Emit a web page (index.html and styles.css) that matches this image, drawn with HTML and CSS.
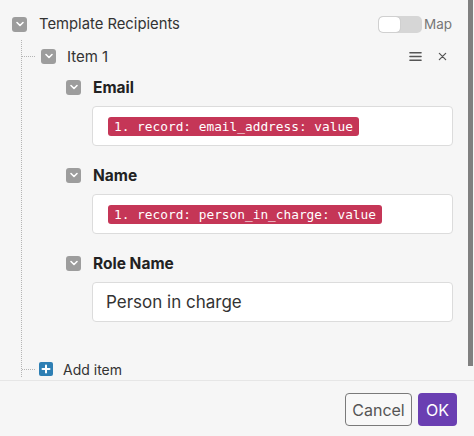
FILE: index.html
```html
<!DOCTYPE html>
<html lang="en">

<head>
  <meta charset="UTF-8">
  <meta name="viewport" content="width=device-width, initial-scale=1.0">
  <title>Template Recipients</title>
  <link rel="stylesheet" href="styles.css">
</head>

<body>
  <div class="dialog">
    <div class="body">
      <span class="scroll-thumb"></span>

      <div class="row top">
        <span class="chk"><svg viewBox="0 0 14 14"><path d="M4 5.5l3 3 3-3" /></svg></span>
        <span class="title">Template Recipients</span>
        <span class="toggle"><span class="knob"></span></span>
        <span class="map">Map</span>
      </div>

      <div class="tree">
        <div class="row item">
          <span class="chk"><svg viewBox="0 0 14 14"><path d="M4 5.5l3 3 3-3" /></svg></span>
          <span class="item-name">Item 1</span>
          <svg class="icon menu" viewBox="0 0 14 14"><path d="M1 3h12M1 7h12M1 11h12" /></svg>
          <svg class="icon close" viewBox="0 0 14 14"><path d="M3 3l8 8M11 3l-8 8" /></svg>
        </div>

        <div class="field">
          <div class="row label">
            <span class="chk"><svg viewBox="0 0 14 14"><path d="M4 5.5l3 3 3-3" /></svg></span>
            <span>Email</span>
          </div>
          <div class="input"><span class="pill">1. record: email_address: value</span></div>
        </div>

        <div class="field">
          <div class="row label">
            <span class="chk"><svg viewBox="0 0 14 14"><path d="M4 5.5l3 3 3-3" /></svg></span>
            <span>Name</span>
          </div>
          <div class="input"><span class="pill">1. record: person_in_charge: value</span></div>
        </div>

        <div class="field">
          <div class="row label">
            <span class="chk"><svg viewBox="0 0 14 14"><path d="M4 5.5l3 3 3-3" /></svg></span>
            <span>Role Name</span>
          </div>
          <div class="input text">Person in charge</div>
        </div>

        <div class="row add">
          <span class="plus"><svg viewBox="0 0 14 14"><path d="M7 3.5v7M3.5 7h7" /></svg></span>
          <span>Add item</span>
        </div>
      </div>
    </div>

    <div class="footer">
      <button class="btn cancel">Cancel</button>
      <button class="btn ok">OK</button>
    </div>
  </div>
</body>

</html>
```

FILE: styles.css
```css
* {
  margin: 0;
  padding: 0;
  box-sizing: border-box;
}

body {
  width: 474px;
  height: 436px;
  background: #f6f6f6;
  font-family: Inter, "Liberation Sans", sans-serif;
  color: #333;
  overflow: hidden;
}

.dialog {
  display: flex;
  flex-direction: column;
  height: 436px;
}

.body {
  position: relative;
  height: 381px;
  padding: 16px 0 0 12px;
  border-bottom: 1px solid #e6e6e6;
}

.scroll-thumb {
  position: absolute;
  top: 0;
  left: 468px;
  width: 5px;
  height: 366px;
  background: #808080;
}

.row {
  display: flex;
  align-items: center;
}

.chk {
  display: flex;
  align-items: center;
  justify-content: center;
  width: 15px;
  height: 15px;
  border-radius: 3px;
  background: #9d9d9d;
}

.chk svg {
  width: 14px;
  height: 14px;
  fill: none;
  stroke: #fff;
  stroke-width: 1.6;
  stroke-linecap: round;
  stroke-linejoin: round;
}

.top {
  height: 16px;
}

.title {
  margin-left: 12px;
  font-size: 14.8px;
  flex: 1;
}

.toggle {
  width: 44px;
  height: 17px;
  border-radius: 5px;
  background: #d6d6d6;
  padding: 1px;
}

.knob {
  display: block;
  width: 21px;
  height: 15px;
  border-radius: 4px;
  background: #fff;
  box-shadow: 0 0 1px rgba(0, 0, 0, 0.3);
}

.map {
  margin: 0 22px 0 2px;
  font-size: 13.5px;
  color: #777;
}

.tree {
  margin: 8px 0 0 9px;
  padding-left: 19px;
  border-left: 1px dotted #b5b5b5;
  position: relative;
}

.item {
  height: 32px;
  position: relative;
}

.item::before,
.add::before {
  content: "";
  position: absolute;
  left: -19px;
  top: 50%;
  width: 13px;
  border-top: 1px dotted #b5b5b5;
}

.item-name {
  margin-left: 11px;
  font-size: 15px;
  flex: 1;
}

.icon {
  width: 13px;
  height: 13px;
  fill: none;
  stroke: #555;
  stroke-width: 1.6;
  stroke-linecap: round;
}

.close {
  margin: 0 26px 0 15px;
  width: 11px;
  height: 11px;
}

.field {
  padding-left: 25px;
  margin-top: 2px;
}

.field + .field {
  margin-top: 16px;
}

.label {
  height: 26px;
  font-size: 15.5px;
  font-weight: 700;
  color: #222;
}

.label .chk {
  margin-right: 12px;
}

.input {
  margin: 6px 0 0 26px;
  width: 361px;
  height: 40px;
  display: flex;
  align-items: center;
  padding-left: 15px;
  background: #fff;
  border: 1px solid #dcdcdc;
  border-radius: 4px;
}

.pill {
  background: #c53657;
  color: #fff;
  border-radius: 3px;
  font-family: "DejaVu Sans Mono", monospace;
  font-size: 12.8px;
  line-height: 19px;
  padding: 0 6px;
}

.input.text {
  padding-left: 13px;
  font-size: 17px;
  color: #333;
}

.add {
  position: relative;
  margin-top: 39px;
  height: 16px;
  margin-bottom: -8px;
  font-size: 14px;
}

.add::before {
  top: 8px;
}

.plus {
  display: flex;
  width: 14px;
  height: 14px;
  margin: 0 10px 0 -2px;
  border-radius: 2px;
  background: #2e7fb4;
}

.plus svg {
  width: 14px;
  height: 14px;
  stroke: #fff;
  stroke-width: 2;
  stroke-linecap: round;
}

.footer {
  display: flex;
  justify-content: flex-end;
  gap: 6px;
  padding: 12px 17px 0 0;
}

.btn {
  height: 33px;
  border-radius: 4px;
  font-family: Inter, "Liberation Sans", sans-serif;
  font-size: 16px;
  cursor: pointer;
}

.cancel {
  width: 67px;
  background: #f8f8f8;
  border: 1px solid #7a7a7a;
  color: #555;
}

.ok {
  width: 39px;
  background: #6a3fb2;
  border: none;
  color: #fff;
}
```
